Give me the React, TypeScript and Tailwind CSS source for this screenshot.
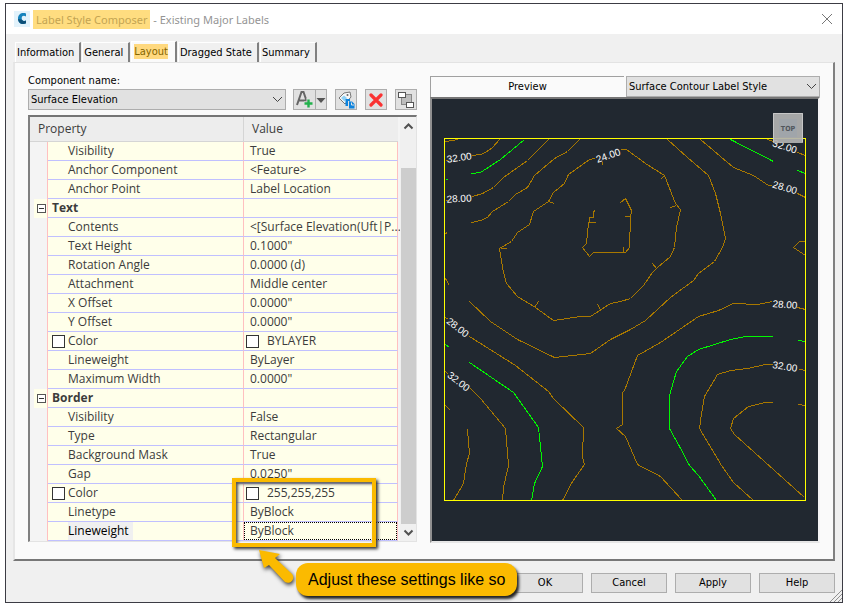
import React from 'react';

type Row = { name: string; value?: string; group?: boolean; swatch?: boolean; selected?: boolean };

const rows: Row[] = [
  { name: 'Visibility', value: 'True' },
  { name: 'Anchor Component', value: '<Feature>' },
  { name: 'Anchor Point', value: 'Label Location' },
  { name: 'Text', group: true },
  { name: 'Contents', value: '<[Surface Elevation(Uft|P...' },
  { name: 'Text Height', value: '0.1000"' },
  { name: 'Rotation Angle', value: '0.0000 (d)' },
  { name: 'Attachment', value: 'Middle center' },
  { name: 'X Offset', value: '0.0000"' },
  { name: 'Y Offset', value: '0.0000"' },
  { name: 'Color', value: 'BYLAYER', swatch: true },
  { name: 'Lineweight', value: 'ByLayer' },
  { name: 'Maximum Width', value: '0.0000"' },
  { name: 'Border', group: true },
  { name: 'Visibility', value: 'False' },
  { name: 'Type', value: 'Rectangular' },
  { name: 'Background Mask', value: 'True' },
  { name: 'Gap', value: '0.0250"' },
  { name: 'Color', value: '255,255,255', swatch: true },
  { name: 'Linetype', value: 'ByBlock' },
  { name: 'Lineweight', value: 'ByBlock', selected: true },
];

const brown = [
  '445,141 458,139',
  '472,155 480,154 485,152 492,147 499,139',
  '472,196 482,193 493,187 503,177 527,160 548,139',
  '471,222 480,220 487,217 492,211 508,201 515,194 527,187 534,175 554,158 567,151 579,139',
  '595,158 589,159 568,174 564,183 553,192 548,201 533,211 529,224 517,232 511,241 499,248 503,272 506,283 517,296 535,307 553,320 580,316 590,316 610,303 620,301 630,298 643,285 652,272 657,267 670,256 674,247 676,227 680,209 675,203 664,175 645,163 626,149 620,149',
  '664,175 660,179',
  '676,205 670,207',
  '652,263 656,268',
  '548,201 554,203',
  '500,248 506,248',
  '538,301 534,307',
  '597,304 600,309',
  '602,161 602,164',
  '595,210 593,211 593,217 589,217 589,222 595,222',
  '588,222 586,243 582,247 589,256 593,252 625,252 629,247 630,217 631,210 625,198 620,202',
  '624,216 630,216',
  '623,246 623,252',
  '445,233 447,232',
  '445,278 449,285',
  '445,160 447,160',
  '445,200 447,200',
  '445,317 448,319',
  '445,371 448,374',
  '667,139 687,157 708,175 715,193 720,213 725,238 722,247 714,261 698,273 693,280 670,297 645,320 630,329 610,339 590,353 554,357 517,339 490,321 469,301',
  '700,139 733,167 753,175 768,185 771,185',
  '767,139 773,141',
  '797,152 805,155',
  '797,193 805,197',
  '805,241 799,241 793,247 805,255',
  '772,301 757,304 733,303 718,310 698,316 660,342 637,355 624,390 622,392 622,424 616,428 625,436 637,464 660,476 682,500',
  '797,307 805,309',
  '772,364 765,364 747,368 730,370 717,374 704,396 701,413 699,428 721,465 733,482 753,500',
  '799,369 805,370',
  '772,402 765,402 748,406 733,418 730,428 734,434 804,497',
  '798,404 805,405',
  '469,336 515,365 548,391 553,398 583,427 582,457 584,464 572,481 562,500',
  '470,388 480,398 505,428 508,465 503,487 502,500',
  '467,429 469,453 466,463 463,483 453,500',
  '445,405 450,410',
];

const green = [
  '471,173 480,172 500,159 524,139',
  '730,139 773,161',
  '797,170 805,173',
  '772,336 745,336 730,339 698,349 687,356 676,371 669,395 669,428 679,446 689,465 698,475 716,500',
  '798,340 805,341',
  '469,362 513,392 538,427 542,466 534,483 531,500',
  '445,344 449,347',
  '445,179 447,179',
];

const labels: [string, number, number, number][] = [
  ['32.00', 459, 157, -8],
  ['28.00', 459, 198, -3],
  ['24.00', 608, 155, -20],
  ['32.00', 785, 146, 18],
  ['28.00', 785, 187, 17],
  ['28.00', 785, 304, 5],
  ['32.00', 785, 366, 9],
  ['28.00', 458, 327, 38],
  ['32.00', 459, 381, 38],
];

const tabs = ['Information', 'General', 'Layout', 'Dragged State', 'Summary'];

function Chevron({ className, d = 'M1 1l4.500 4.500L10 1' }: { className: string; d?: string }) {
  return (
    <svg className={className} width="11" height="7" viewBox="0 0 11 7" fill="none" stroke="currentColor" aria-hidden="true">
      <path d={d} />
    </svg>
  );
}

function Swatch() {
  return <span className="inline-block size-[13px] shrink-0 border border-[#333] bg-white" />;
}

function ContourPreview() {
  return (
    <svg viewBox="432 99 386 442" className="block w-full" role="img" aria-label="Contour preview">
      <g fill="none" strokeWidth="1" shapeRendering="crispEdges" transform="translate(.5 .5)">
        {brown.map((p) => <polyline key={p} points={p} stroke="#a87800" />)}
        {green.map((p) => <polyline key={p} points={p} stroke="#00f800" />)}
        <rect x="444" y="138" width="361" height="362" stroke="#ffff00" />
      </g>
      <g fill="#fff" fontSize="10" textAnchor="middle" className="font-['Liberation_Sans',sans-serif]">
        {labels.map(([t, x, y, r]) => (
          <text key={`${x}-${y}`} x={x} y={y + 4} transform={`rotate(${r} ${x} ${y})`}>{t}</text>
        ))}
      </g>
      <rect x="773" y="113" width="30" height="30" fill="#b2b2b2" fillOpacity=".92" />
      <path d="M773.500 142V113.500H802.500V142" fill="none" stroke="#c6c6c6" />
      <rect x="779" y="119" width="18" height="18" fill="#a0a5aa" />
      <text x="788" y="131" fontSize="7" fontWeight="700" textAnchor="middle" fill="#50565c" className="font-['DejaVu_Sans_Condensed','Roboto',sans-serif]">TOP</text>
    </svg>
  );
}

function PropertyTable() {
  return (
    <table id="properties" className="w-full table-fixed border-separate border-spacing-0 text-left text-[#3c3c3c]">
      <colgroup>
        <col className="w-[18px]" />
        <col className="w-[196px]" />
        <col />
      </colgroup>
      <thead>
        <tr className="h-[25px] bg-[#ededed]">
          <th colSpan={2} className="border-r border-b border-[#d5d5d5] p-0 pl-2 font-normal">Property</th>
          <th className="border-b border-[#d5d5d5] p-0 pl-2 font-normal">Value</th>
        </tr>
      </thead>
      <tbody>
        {rows.map((r, i) => (
          <tr key={i} className="h-[19px] leading-[18px]">
            <td className="border-r border-[#ffc0c0] p-0 pl-1">
              {r.group && (
                <span className="flex h-[19px] items-center bg-[#ffffea] pl-[3px]">
                  <button aria-label={`Collapse ${r.name}`} className="flex size-[9px] items-center justify-center border border-[#555] bg-white">
                    <span className="h-px w-[5px] bg-[#333]" />
                  </button>
                </span>
              )}
            </td>
            <td className="border-r border-b border-r-[#ffc0c0] border-b-[#c0c0ff] bg-[#ffffea] p-0">
              {r.group ? (
                <span className="block pl-1 font-bold">{r.name}</span>
              ) : (
                <span className="flex items-center pl-1">
                  <span className="flex w-4 items-center">{r.swatch && <Swatch />}</span>
                  <span className={r.selected ? 'bg-[#f0f0f0] pr-1 text-black' : ''}>{r.name}</span>
                </span>
              )}
            </td>
            <td className="border-r border-b border-r-[#ffc0c0] border-b-[#c0c0ff] bg-[#ffffea] p-0">
              {r.swatch ? (
                <span className="flex items-center gap-2 pl-[2px]"><Swatch />{r.value}</span>
              ) : (
                <span className={`block whitespace-nowrap ${r.selected ? 'border border-dotted border-black pl-[5px] leading-4' : 'pl-[6px]'}`}>{r.value}</span>
              )}
            </td>
          </tr>
        ))}
      </tbody>
    </table>
  );
}

const toolButton = 'flex h-[21px] w-[22px] items-center justify-center border border-[#adadad] bg-[#e1e1e1]';
const selectBox = 'h-[21px] w-full appearance-none border border-[#adadad] bg-[#e1e1e1] px-[2px] pt-[2px] text-black';

export default function App() {
  return (
    <div className="bg-white px-[5px] pt-[3px] pb-1 text-[11px] text-black font-['DejaVu_Sans_Condensed','Roboto',sans-serif]">
      <div className="relative border border-[#3c3c44] bg-[#f0f0f0]">
        <header className="flex h-[30px] items-center bg-white pr-[9px] pl-2 text-[#949494] font-['Noto_Sans',sans-serif]">
          <svg width="16" height="17" viewBox="0 0 16 17" aria-hidden="true">
            <rect width="16" height="16" fill="#e2f2fb" />
            <path d="M12 2.500C8 1 4 3 4 7.500c0 3.500 2 5.500 5 5.500 1.200 0 2.300-.3 3-.8V9.500c-2 1-4.300.6-4.300-2.200S10 4.400 12 5.400z" fill="#1583bd" />
            <path d="M4 8c.3 3.200 2.300 5 5 5 1.200 0 2.300-.3 3-.8V9.500c-1.500.9-3.300.6-4-.7z" fill="#0c4f78" />
          </svg>
          <h1 className="ml-[3px] flex-1 leading-[19px]">
            <span className="inline-block bg-[#ffdd80] px-[3px] text-[#c3a452]">Label Style Composer</span> - Existing Major Labels
          </h1>
          <button aria-label="Close">
            <svg width="12" height="12" viewBox="0 0 12 12" stroke="#777" aria-hidden="true"><path d="M1 1l10 10M11 1L1 11" /></svg>
          </button>
        </header>

        <div className="px-[7px] pt-[7px]">
          <div role="tablist" className="flex items-end gap-[1px] pl-[2px]">
            {tabs.map((t) => (
              <button
                key={t}
                role="tab"
                aria-selected={t === 'Layout'}
                className={`border-t border-l border-r-2 border-t-[#fff] border-l-[#fff] border-r-[#808080] ${
                  t === 'Layout' ? 'h-[21px] bg-[#fafafa] pr-[7px] pl-[2px] leading-[18px]' : 'h-5 pr-[5px] pl-px leading-4'
                }`}
              >
                <span className={t === 'Layout' ? 'bg-[#ffd97f] py-px text-[#856500]' : ''}>{t}</span>
              </button>
            ))}
          </div>

          <main className="grid grid-cols-[389fr_390fr] gap-[13px] border-t border-r-2 border-b-2 border-l-2 border-t-[#e3e3e3] border-r-[#808080] border-b-[#777] border-l-[#e6e6e6] bg-[#fafafa] pt-[10px] pr-[13px] pb-4 pl-[13px]">
            <section>
              <label htmlFor="component" className="block h-4 leading-[15px]">Component name:</label>
              <div className="flex items-start gap-[7px]">
                <div className="relative flex-1">
                  <select id="component" className={selectBox}><option>Surface Elevation</option></select>
                  <Chevron className="pointer-events-none absolute top-[7px] right-[3px] text-[#444]" />
                </div>
                <div className="flex gap-2">
                  <button aria-label="Create component" className="flex h-[21px] w-[34px] items-center border border-[#adadad] bg-[#e1e1e1]">
                    <svg width="32" height="19" viewBox="0 0 32 19" aria-hidden="true">
                      <path d="M3 15L7.500 2h2L14 15M5 10.500h7" fill="none" stroke="#666" strokeWidth="2" />
                      <path d="M14.500 8v10M10 13.500h9" stroke="#e1e1e1" strokeWidth="4" />
                      <path d="M14.500 9.500v8M10.500 13.500h8" stroke="#22b14c" strokeWidth="2.400" />
                      <path d="M21.500 0v19" stroke="#adadad" />
                      <path d="M22.500 8h9L27 13z" fill="#555" />
                    </svg>
                  </button>
                  <button aria-label="Copy component" className={toolButton}>
                    <svg width="18" height="18" viewBox="0 0 18 18" aria-hidden="true">
                      <path d="M2 7L7 2l6-1 1 5-6 7z" fill="#f7f7f7" stroke="#777" />
                      <path d="M4 7l3-2.500L10 7l-2.500 3.500z" fill="#8ed0f5" />
                      <circle cx="10.500" cy="4" r="1" fill="#666" />
                      <path d="M8.500 8H13v2.500h-2V15H8.500z" fill="#0d83dd" />
                      <path d="M12 10.500h3l2.500 2.500v4.500H12z" fill="#0d83dd" />
                      <path d="M14.500 11.500v2.500H17M11.500 10v6" fill="none" stroke="#e1e1e1" />
                    </svg>
                  </button>
                  <button aria-label="Delete component" className={toolButton}>
                    <svg width="14" height="14" viewBox="0 0 14 14" stroke="#fa3232" strokeWidth="3.200" strokeLinecap="round" aria-hidden="true"><path d="M2 2l10 10M12 2L2 12" /></svg>
                  </button>
                  <button aria-label="Component draw order" className={toolButton}>
                    <svg width="18" height="18" viewBox="0 0 18 18" stroke="#555" aria-hidden="true">
                      <rect x="4.500" y="3.500" width="10" height="10" fill="#bdbdbd" stroke="#888" />
                      <rect x="1.500" y="1.500" width="7" height="5" fill="#fff" />
                      <rect x="9.500" y="11.500" width="7" height="5" fill="#fff" />
                    </svg>
                  </button>
                </div>
              </div>

              <div className="relative mt-[5px] flex border-t-2 border-r border-b border-l-2 border-t-[#757575] border-r-[#e3e3e3] border-b-[#e3e3e3] border-l-[#808080] bg-[#f4f4f4] text-xs font-['Open_Sans','Noto_Sans',sans-serif]">
                <div className="min-w-0 flex-1"><PropertyTable /></div>
                <div className="ml-[2px] flex w-4 flex-col items-center bg-[#f0f0f0] text-[#505050]" role="scrollbar" aria-controls="properties" aria-valuenow={100} aria-label="Properties">
                  <Chevron className="mt-[6px] mb-[38px] stroke-[2]" d="M1.500 5.500l4-4 4 4" />
                  <div className="w-[15px] flex-1 bg-[#cdcdcd]" />
                  <Chevron className="my-[5px] stroke-[2]" d="M1.500 1.500l4 4 4-4" />
                </div>

                <div className="pointer-events-none absolute top-[361px] left-[202px] h-[69px] w-[144px] border-4 border-[#fbba00] shadow-[2px_2px_3px_#333,inset_2px_2px_3px_#555]" />
                <svg className="pointer-events-none absolute top-[429px] left-[226px] drop-shadow-[1px_2px_2px_#333]" width="42" height="42" viewBox="0 0 42 42" aria-hidden="true">
                  <path d="M3 4L24 8L19 12L36 28C40 33 34 39 29 36L13 19L8 22Z" fill="#fbba00" />
                </svg>
                <p className="pointer-events-none absolute top-[446px] left-[266px] z-10 rounded-xl bg-[#fbba00] px-3 text-base leading-[33px] whitespace-nowrap text-black shadow-[2px_3px_3px_#222] font-['Liberation_Sans',sans-serif]">
                  Adjust these settings like so
                </p>
              </div>
            </section>

            <section className="pt-[3px]">
              <div className="grid grid-cols-2 gap-[2px]">
                <h2 className="border-t border-l border-[#a0a0a0] text-center leading-5">Preview</h2>
                <div className="relative">
                  <select aria-label="Preview style" className={selectBox}><option>Surface Contour Label Style</option></select>
                  <Chevron className="pointer-events-none absolute top-[7px] right-[3px] text-[#444]" />
                </div>
              </div>
              <div className="border-2 border-t-[#757575] border-r-[#f4f4f4] border-b-[#e6e6e6] border-l-[#909090] bg-[#212830]">
                <ContourPreview />
              </div>
            </section>
          </main>
        </div>

        <footer className="flex justify-end gap-2 pt-3 pr-[7px] pb-[9px]">
          {['OK', 'Cancel', 'Apply', 'Help'].map((b) => (
            <button key={b} className="h-5 w-[76px] border border-[#adadad] bg-[#e1e1e1] leading-[18px]">{b}</button>
          ))}
        </footer>
        <svg className="absolute right-0 bottom-0" width="12" height="12" viewBox="0 0 12 12" stroke="#909090" aria-hidden="true">
          <path d="M0 12L12 0M4 12l8-8M8 12l4-4" />
        </svg>
      </div>
    </div>
  );
}
